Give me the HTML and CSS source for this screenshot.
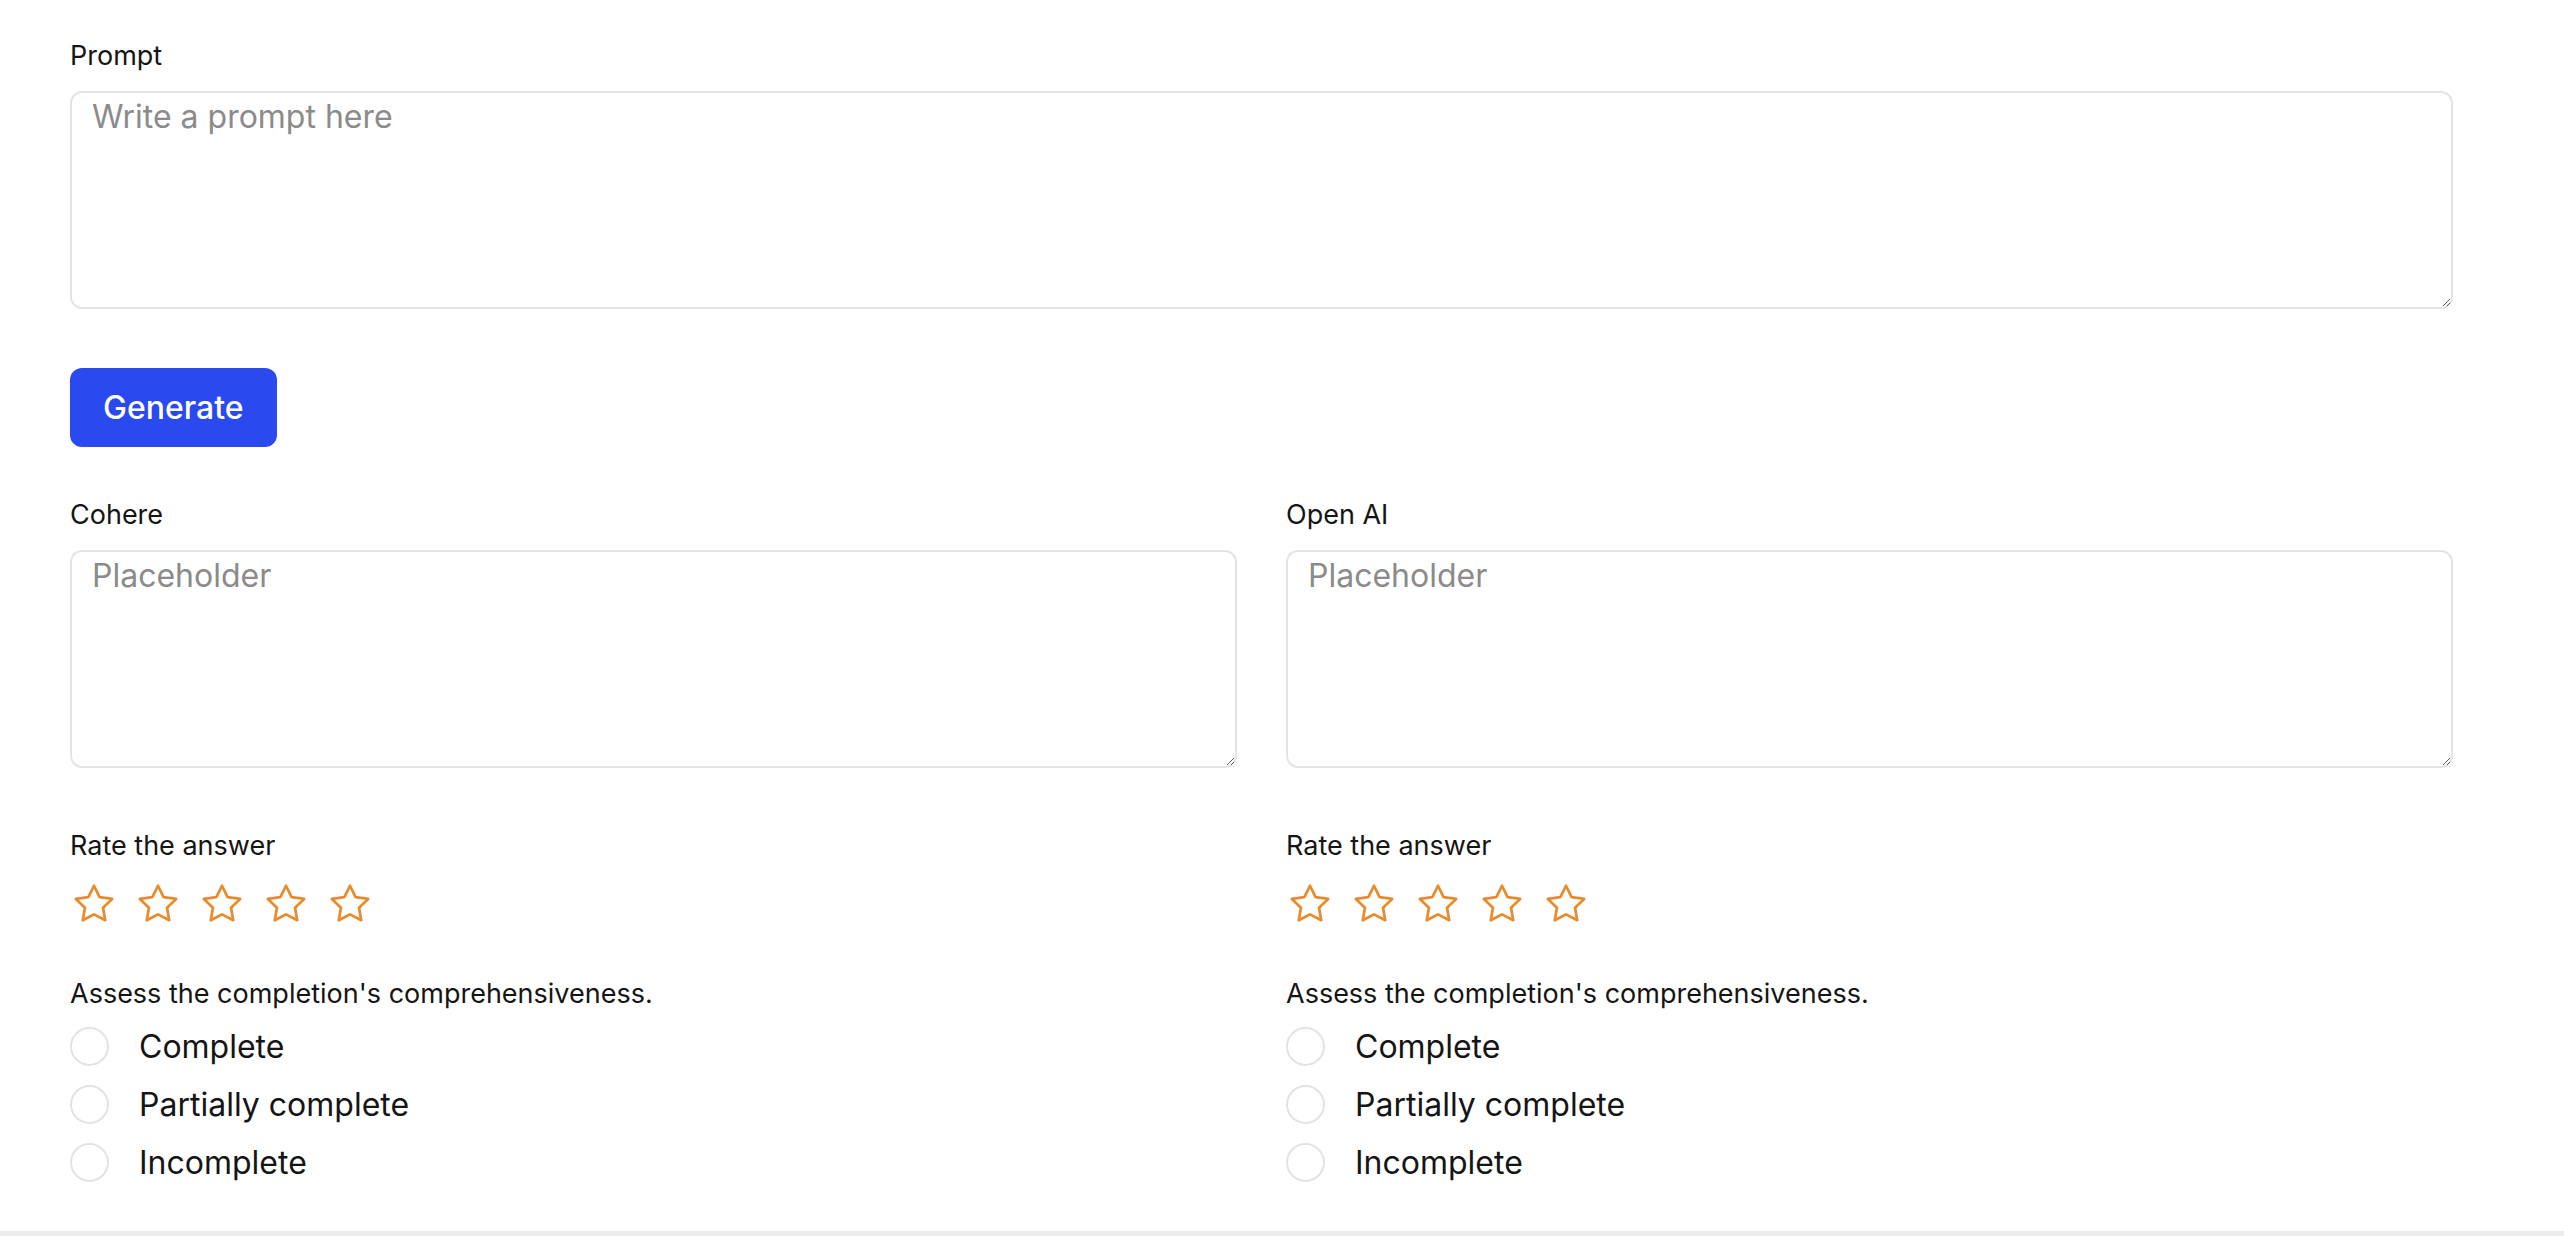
FILE: index.html
```html
<!DOCTYPE html>
<html lang="en">
<head>
<meta charset="utf-8">
<title>Compare completions</title>
<link rel="stylesheet" href="styles.css">
</head>
<body>
<div class="page">
  <main class="content">
    <section class="field">
      <label class="label" for="prompt">Prompt</label>
      <textarea id="prompt" class="textbox" placeholder="Write a prompt here"></textarea>
    </section>

    <button class="btn" type="button">Generate</button>

    <div class="columns">
      <section class="col">
        <label class="label" for="cohere">Cohere</label>
        <textarea id="cohere" class="textbox" placeholder="Placeholder"></textarea>

        <p class="label label-rate">Rate the answer</p>
        <div class="stars">
          <svg class="star" viewBox="-1.23 -1.73 26.46 26.46"><polygon points="12 2 15.09 8.26 22 9.27 17 14.14 18.18 21.02 12 17.77 5.82 21.02 7 14.14 2 9.27 8.91 8.26 12 2"/></svg>
          <svg class="star" viewBox="-1.23 -1.73 26.46 26.46"><polygon points="12 2 15.09 8.26 22 9.27 17 14.14 18.18 21.02 12 17.77 5.82 21.02 7 14.14 2 9.27 8.91 8.26 12 2"/></svg>
          <svg class="star" viewBox="-1.23 -1.73 26.46 26.46"><polygon points="12 2 15.09 8.26 22 9.27 17 14.14 18.18 21.02 12 17.77 5.82 21.02 7 14.14 2 9.27 8.91 8.26 12 2"/></svg>
          <svg class="star" viewBox="-1.23 -1.73 26.46 26.46"><polygon points="12 2 15.09 8.26 22 9.27 17 14.14 18.18 21.02 12 17.77 5.82 21.02 7 14.14 2 9.27 8.91 8.26 12 2"/></svg>
          <svg class="star" viewBox="-1.23 -1.73 26.46 26.46"><polygon points="12 2 15.09 8.26 22 9.27 17 14.14 18.18 21.02 12 17.77 5.82 21.02 7 14.14 2 9.27 8.91 8.26 12 2"/></svg>
        </div>

        <p class="label label-assess">Assess the completion's comprehensiveness.</p>
        <div class="radios">
          <label class="radio"><input type="radio" name="c1"><span>Complete</span></label>
          <label class="radio"><input type="radio" name="c1"><span>Partially complete</span></label>
          <label class="radio"><input type="radio" name="c1"><span>Incomplete</span></label>
        </div>
      </section>

      <section class="col">
        <label class="label" for="openai">Open AI</label>
        <textarea id="openai" class="textbox" placeholder="Placeholder"></textarea>

        <p class="label label-rate">Rate the answer</p>
        <div class="stars">
          <svg class="star" viewBox="-1.23 -1.73 26.46 26.46"><polygon points="12 2 15.09 8.26 22 9.27 17 14.14 18.18 21.02 12 17.77 5.82 21.02 7 14.14 2 9.27 8.91 8.26 12 2"/></svg>
          <svg class="star" viewBox="-1.23 -1.73 26.46 26.46"><polygon points="12 2 15.09 8.26 22 9.27 17 14.14 18.18 21.02 12 17.77 5.82 21.02 7 14.14 2 9.27 8.91 8.26 12 2"/></svg>
          <svg class="star" viewBox="-1.23 -1.73 26.46 26.46"><polygon points="12 2 15.09 8.26 22 9.27 17 14.14 18.18 21.02 12 17.77 5.82 21.02 7 14.14 2 9.27 8.91 8.26 12 2"/></svg>
          <svg class="star" viewBox="-1.23 -1.73 26.46 26.46"><polygon points="12 2 15.09 8.26 22 9.27 17 14.14 18.18 21.02 12 17.77 5.82 21.02 7 14.14 2 9.27 8.91 8.26 12 2"/></svg>
          <svg class="star" viewBox="-1.23 -1.73 26.46 26.46"><polygon points="12 2 15.09 8.26 22 9.27 17 14.14 18.18 21.02 12 17.77 5.82 21.02 7 14.14 2 9.27 8.91 8.26 12 2"/></svg>
        </div>

        <p class="label label-assess">Assess the completion's comprehensiveness.</p>
        <div class="radios">
          <label class="radio"><input type="radio" name="c2"><span>Complete</span></label>
          <label class="radio"><input type="radio" name="c2"><span>Partially complete</span></label>
          <label class="radio"><input type="radio" name="c2"><span>Incomplete</span></label>
        </div>
      </section>
    </div>
  </main>
  <div class="footer-strip"></div>
</div>
</body>
</html>
```

FILE: styles.css
```css
* {
  box-sizing: border-box;
}

html, body {
  margin: 0;
  padding: 0;
  background: #ffffff;
}

body {
  font-family: Inter, "Noto Sans", sans-serif;
  color: #151515;
}

.page {
  min-height: 100vh;
  display: flex;
  flex-direction: column;
}

.content {
  padding: 38px 111px 0 70px;
}

.field {
  margin: 0;
}

.label {
  display: block;
  margin: 0 0 17px 0;
  font-size: 27px;
  line-height: 36px;
  font-weight: 400;
  color: #151515;
}

.textbox {
  display: block;
  width: 100%;
  height: 218px;
  margin: 0;
  padding: 4px 20px;
  border: 2px solid #e4e4e4;
  border-radius: 12px;
  font-family: Inter, "Noto Sans", sans-serif;
  font-size: 32px;
  line-height: normal;
  color: #151515;
  background: #ffffff;
  outline: none;
}

.textbox::placeholder {
  color: #8b8b8b;
}

.btn {
  display: inline-flex;
  align-items: center;
  justify-content: center;
  height: 79px;
  margin-top: 59px;
  padding: 0 33px;
  border: none;
  border-radius: 12px;
  background: #2a4af0;
  color: #ffffff;
  font-family: Inter, "Noto Sans", sans-serif;
  font-size: 32px;
  font-weight: 500;
}

.columns {
  display: grid;
  grid-template-columns: 1fr 1fr;
  column-gap: 49px;
  margin-top: 50px;
}

.col {
  display: flex;
  flex-direction: column;
}

.label-rate {
  margin-top: 60px;
  margin-bottom: 15px;
}

.stars {
  display: flex;
  gap: 16px;
}

.star {
  width: 48px;
  height: 48px;
  fill: none;
  stroke: #e98a2c;
  stroke-width: 1.5;
  stroke-linejoin: round;
  stroke-linecap: round;
}

.label-assess {
  margin-top: 49px;
  margin-bottom: 10px;
}

.radios {
  display: flex;
  flex-direction: column;
  gap: 10px;
}

.radio {
  display: flex;
  align-items: center;
  gap: 30px;
  height: 48px;
  font-size: 32px;
  color: #151515;
}

.radio input {
  appearance: none;
  -webkit-appearance: none;
  flex: none;
  width: 39px;
  height: 39px;
  margin: 0;
  border: 2px solid #e3e3e3;
  border-radius: 50%;
  background: #ffffff;
}

.footer-strip {
  margin-top: auto;
  height: 5px;
  background: #ebebeb;
}
```
